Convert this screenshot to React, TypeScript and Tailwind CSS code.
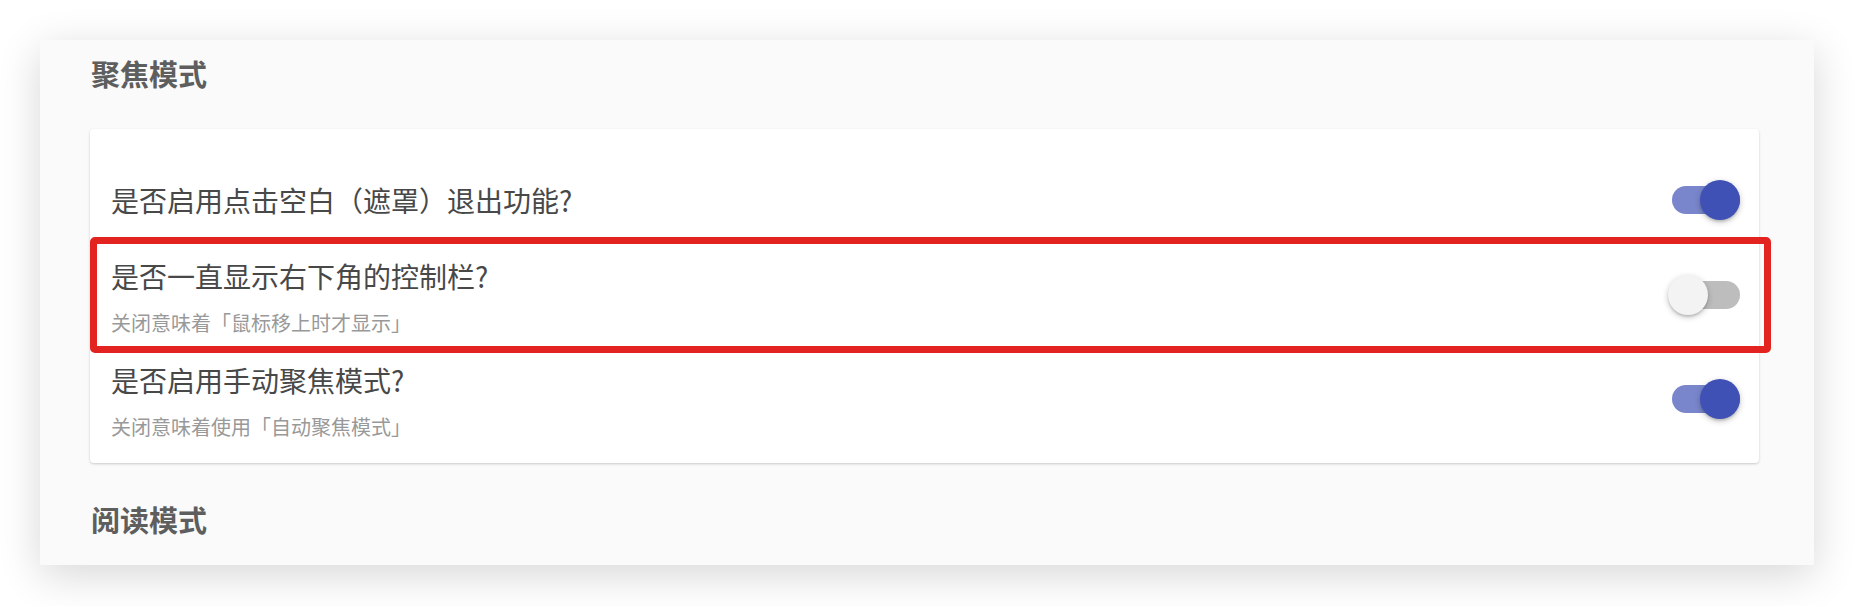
import React from "react";

const FONT = { fontFamily: '"Noto Sans CJK SC", "Noto Sans", sans-serif' };

function Toggle({ on }: { on: boolean }) {
  return (
    <div className="relative w-[72px] h-[40px] shrink-0">
      <div
        className={
          "absolute left-[4px] top-[6px] w-[68px] h-[28px] rounded-full " +
          (on ? "bg-[#7986cb]" : "bg-[#bdbdbd]")
        }
      />
      <div
        className={
          "absolute top-0 w-[40px] h-[40px] rounded-full shadow-[0_2px_6px_rgba(0,0,0,0.22),0_2px_2px_rgba(0,0,0,0.12)] " +
          (on ? "left-[32px] bg-[#3f51b5]" : "left-0 bg-[#f3f3f3]")
        }
      />
    </div>
  );
}

function Row({
  title,
  sub,
  on,
  h,
  highlight,
}: {
  title: string;
  sub?: string;
  on: boolean;
  h: string;
  highlight?: boolean;
}) {
  return (
    <div className={"relative flex items-center justify-between pl-[21px] pr-[19px] " + h}>
      <div className={"flex flex-col " + (sub ? "pt-[5px]" : "")}>
        <div className="text-[28px] leading-[36px] text-[#484848]">{title}</div>
        {sub && (
          <div className="mt-[15px] text-[20px] leading-[28px] text-[#999999]">{sub}</div>
        )}
      </div>
      <Toggle on={on} />
      {highlight && (
        <div className="absolute left-0 -right-[12px] -top-[8px] -bottom-[8px] border-[7px] border-[#e2231f] rounded-[5px] pointer-events-none" />
      )}
    </div>
  );
}

export default function App() {
  return (
    <div className="w-[1854px] h-[606px] bg-white pt-[40px] pl-[40px]" style={FONT}>
      <div className="w-[1774px] h-[525px] overflow-hidden bg-[#fafafa] shadow-[0_10px_40px_rgba(0,0,0,0.16)] pt-[15px] pl-[50px] pr-[55px]">
        <div className="pl-[1px] text-[29px] leading-[36px] font-bold text-[#5e5e5e]">聚焦模式</div>
        <div className="mt-[38px] bg-white rounded-[4px] shadow-[0_1px_3px_rgba(0,0,0,0.12),0_1px_2px_rgba(0,0,0,0.08)] pt-[26px] pb-[10px]">
          <Row title="是否启用点击空白（遮罩）退出功能?" on={true} h="h-[90px]" />
          <Row
            title="是否一直显示右下角的控制栏?"
            sub="关闭意味着「鼠标移上时才显示」"
            on={false}
            h="h-[100px]"
            highlight
          />
          <Row
            title="是否启用手动聚焦模式?"
            sub="关闭意味着使用「自动聚焦模式」"
            on={true}
            h="h-[108px]"
          />
        </div>
        <div className="mt-[38px] pl-[1px] text-[29px] leading-[36px] font-bold text-[#5e5e5e]">阅读模式</div>
      </div>
    </div>
  );
}
